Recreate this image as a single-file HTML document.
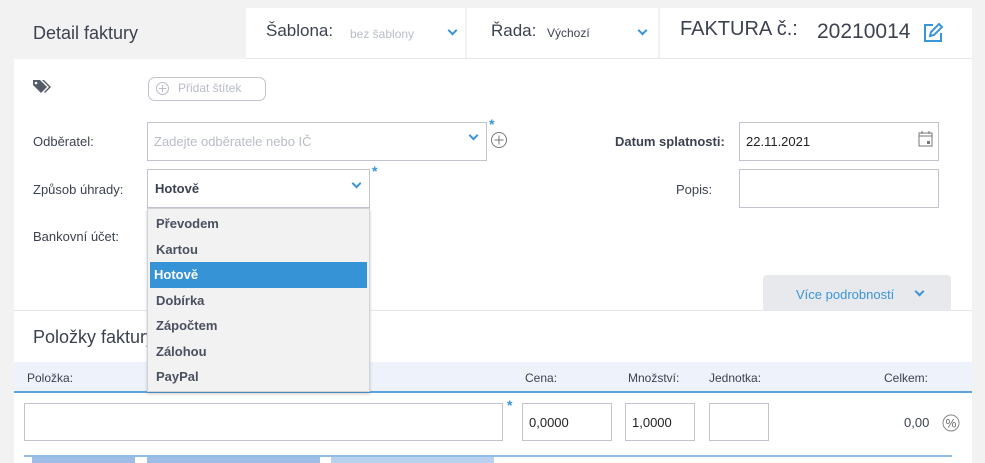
<!DOCTYPE html>
<html><head><meta charset="utf-8"><style>
*{box-sizing:border-box;margin:0;padding:0}
body{width:985px;height:463px;overflow:hidden;background:#f2f2f2;font-family:"Liberation Sans",sans-serif;color:#3c4250;position:relative}
.a{position:absolute}
.box{position:absolute;background:#fff;border:1px solid #bfc4cd}
.lbl{position:absolute;font-size:13px;color:#3c4250}
.chev{position:absolute;width:7px;height:7px;border-right:2px solid #3a95d8;border-bottom:2px solid #3a95d8;transform:rotate(45deg)}
.ast{position:absolute;color:#3a95d8;font-size:14px;font-weight:bold}
.dd div{height:25.5px;line-height:25.5px;padding-left:6px;font-size:13px;font-weight:bold;color:#4a5060}
</style></head><body>
<div class="a" style="left:33px;top:23px;font-size:18px;color:#3c4250">Detail faktury</div>
<div class="a" style="left:246px;top:8px;width:219px;height:50px;background:#fff"></div>
<div class="a" style="left:467px;top:8px;width:191px;height:50px;background:#fff"></div>
<div class="a" style="left:660px;top:8px;width:312px;height:50px;background:#fff"></div>
<div class="a" style="left:246px;top:58px;width:726px;height:1px;background:#e6e7ea"></div>
<div class="a" style="left:266px;top:21px;font-size:17px">Šablona:</div>
<div class="a" style="left:350px;top:27px;font-size:12px;color:#b8bcc6">bez šablony</div>
<div class="chev" style="left:449px;top:27px"></div>
<div class="a" style="left:491px;top:21px;font-size:17px">Řada:</div>
<div class="a" style="left:547px;top:26px;font-size:12px">Výchozí</div>
<div class="chev" style="left:639px;top:27px"></div>
<div class="a" style="left:680px;top:18px;font-size:20px">FAKTURA č.:</div>
<div class="a" style="left:817px;top:20px;font-size:21px">20210014</div>
<svg class="a" style="left:922px;top:22px" width="22" height="22" viewBox="0 0 22 22"><path d="M11 3H3v16h16v-8" fill="none" stroke="#3a95d8" stroke-width="2"/><path d="M8 14l1-4 8-8 3 3-8 8z" fill="none" stroke="#3a95d8" stroke-width="2"/></svg>
<div class="a" style="left:14px;top:59px;width:958px;height:404px;background:#fff"></div>
<svg class="a" style="left:33px;top:79px" width="20" height="16" viewBox="0 0 20 16"><path d="M0 1h7l7 7-6 6-8-8z" fill="#555b67"/><circle cx="3" cy="4" r="1.3" fill="#fff"/><path d="M9 1h2l7 7-6 6-1-1 5-5z" fill="#555b67"/></svg>
<div class="a" style="left:148px;top:77px;width:118px;height:24px;border:1px solid #bfc4cd;border-radius:7px"></div>
<svg class="a" style="left:155px;top:81px" width="15" height="15"><circle cx="7.5" cy="7.5" r="6" fill="none" stroke="#b8bcc6"/><path d="M7.5 4v7M4 7.5h7" stroke="#b8bcc6"/></svg>
<div class="a" style="left:178px;top:81px;font-size:12px;color:#b8bcc6">Přidat štítek</div>
<div class="lbl" style="left:33px;top:134px">Odběratel:</div>
<div class="box" style="left:147px;top:122px;width:340px;height:39px"></div>
<div class="a" style="left:154px;top:134px;font-size:13px;color:#b8bcc6">Zadejte odběratele nebo IČ</div>
<div class="chev" style="left:470px;top:132px"></div>
<div class="ast" style="left:489px;top:116px">*</div>
<svg class="a" style="left:490px;top:131px" width="18" height="18"><circle cx="9" cy="9" r="7.5" fill="none" stroke="#777"/><path d="M9 4.5v9M4.5 9h9" stroke="#777"/></svg>
<div class="a" style="left:615px;top:134px;font-size:13px;font-weight:bold">Datum splatnosti:</div>
<div class="box" style="left:739px;top:122px;width:200px;height:39px"></div>
<div class="a" style="left:746px;top:134px;font-size:13px;color:#222">22.11.2021</div>
<svg class="a" style="left:918px;top:131px" width="15" height="16"><rect x="1" y="2" width="13" height="13" fill="none" stroke="#777"/><path d="M1 5h13M4 0v3M11 0v3" stroke="#777"/><rect x="9" y="10" width="3" height="3" fill="#777"/></svg>
<div class="lbl" style="left:33px;top:182px">Způsob úhrady:</div>
<div class="box" style="left:147px;top:169px;width:223px;height:39px"></div>
<div class="a" style="left:155px;top:181px;font-size:13px;font-weight:bold">Hotově</div>
<div class="chev" style="left:353px;top:180px"></div>
<div class="ast" style="left:372px;top:163px">*</div>
<div class="lbl" style="left:676px;top:182px">Popis:</div>
<div class="box" style="left:739px;top:169px;width:200px;height:39px"></div>
<div class="lbl" style="left:33px;top:229px">Bankovní účet:</div>
<div class="a" style="left:763px;top:275px;width:188px;height:36px;background:#e8e9ec;border-radius:4px 4px 0 0"></div>
<div class="a" style="left:796px;top:287px;font-size:13px;color:#3a95d8">Více podrobností</div>
<div class="chev" style="left:916px;top:288px"></div>
<div class="a" style="left:14px;top:310px;width:958px;height:1px;background:#e6e7ea"></div>
<div class="a" style="left:33px;top:327px;font-size:18px">Položky faktury</div>
<div class="a" style="left:14px;top:362px;width:958px;height:31px;background:#eef3fb;border-bottom:2px solid #5ea4dc"></div>
<div class="lbl" style="left:27px;top:371px;font-size:12px">Položka:</div>
<div class="lbl" style="left:525px;top:371px;font-size:12px">Cena:</div>
<div class="lbl" style="left:628px;top:371px;font-size:12px">Množství:</div>
<div class="lbl" style="left:709px;top:371px;font-size:12px">Jednotka:</div>
<div class="lbl" style="left:884px;top:371px;font-size:12px">Celkem:</div>
<div class="box" style="left:24px;top:403px;width:479px;height:38px"></div>
<div class="ast" style="left:507px;top:397px">*</div>
<div class="box" style="left:522px;top:403px;width:90px;height:38px"></div>
<div class="a" style="left:529px;top:415px;font-size:13px;color:#222">0,0000</div>
<div class="box" style="left:625px;top:403px;width:70px;height:38px"></div>
<div class="a" style="left:632px;top:415px;font-size:13px;color:#222">1,0000</div>
<div class="box" style="left:709px;top:403px;width:60px;height:38px"></div>
<div class="a" style="left:904px;top:415px;font-size:13px">0,00</div>
<svg class="a" style="left:942px;top:414px" width="18" height="18"><circle cx="9" cy="9" r="8" fill="none" stroke="#888"/><text x="9" y="13.5" font-size="12" text-anchor="middle" fill="#666" font-family="Liberation Sans">%</text></svg>
<div class="a" style="left:24px;top:455px;width:928px;height:2px;background:#8fbde6"></div>
<div class="a" style="left:32px;top:457px;width:103px;height:6px;background:#9dbde6"></div>
<div class="a" style="left:147px;top:457px;width:173px;height:6px;background:#9dbde6"></div>
<div class="a" style="left:331px;top:457px;width:163px;height:6px;background:#b9d0ef"></div>
<div class="a dd" style="left:147px;top:208px;width:223px;height:184px;background:#f2f2f2;border:1px solid #d0d3d8;box-shadow:0 2px 3px rgba(0,0,0,.2);padding:2px 2px">
<div>Převodem</div><div>Kartou</div><div style="background:#3593d6;color:#fff;padding-left:4px">Hotově</div><div>Dobírka</div><div>Zápočtem</div><div>Zálohou</div><div>PayPal</div>
</div>
</body></html>
